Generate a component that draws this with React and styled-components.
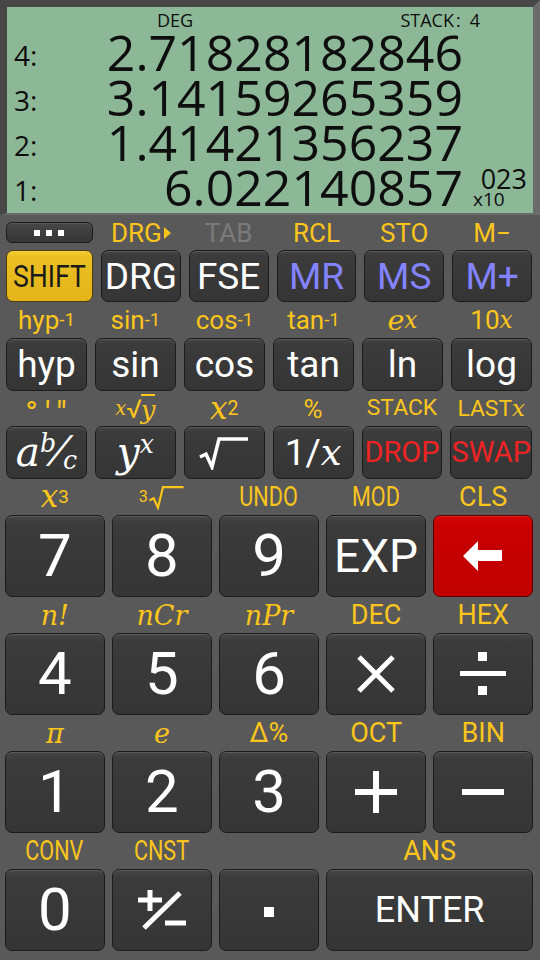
import styled, { createGlobalStyle } from 'styled-components'

const GlobalStyle = createGlobalStyle`
  html, body {
    margin: 0;
    padding: 0;
    background: #595959;
  }
  body {
    font-family: Roboto, "Noto Sans", sans-serif;
  }
`

const YELLOW = '#fbc51c'
const LAVENDER = '#8383ff'
const RED_INK = '#ee2424'

// Whole phone screen
const Screen = styled.div`
  width: 540px;
  height: 960px;
  overflow: hidden;
  background: #595959;
  display: flex;
  flex-direction: column;
`

// LCD panel
const Display = styled.div`
  height: 215px;
  box-sizing: border-box;
  border-style: solid;
  border-width: 7px 7px 2px 7px;
  border-color: #474747 #6b6b6b #6b6b6b #474747;
  background: #8db898;
  color: #0e0e0e;
  font-family: "Open Sans", "DejaVu Sans", sans-serif;
  display: flex;
  flex-direction: column;
`

const Status = styled.div`
  height: 23px;
  display: flex;
  justify-content: space-between;
  align-items: flex-end;
  padding: 0 53px 0 150px;
  font-size: 18px;
  line-height: 20px;
`

const Colon = styled.span`
  margin: 0 9px 0 2px;
`

const StackRow = styled.div`
  height: 45px;
  display: flex;
  align-items: center;
`

const RowLabel = styled.div`
  width: 40px;
  padding-left: 7px;
  padding-top: 6px;
  font-size: 28px;
  line-height: 45px;
`

const Value = styled.div`
  flex: 1;
  text-align: right;
  font-size: 50px;
  line-height: 45px;
  white-space: nowrap;
`

const Exponent = styled.div`
  width: 70px;
  height: 45px;
  display: flex;
  flex-direction: column;
  justify-content: flex-end;
`

const ExpDigits = styled.div`
  text-align: right;
  padding-right: 6px;
  font-size: 27px;
  line-height: 20px;
`

const ExpBase = styled.div`
  padding-left: 10px;
  font-size: 19px;
  line-height: 21px;
`

// Keypad
const KeyGrid = styled.div`
  display: grid;
  grid-template-columns: repeat(${(p) => p.$cols}, 1fr);
  column-gap: ${(p) => p.$gap}px;
  padding: ${(p) => p.$pad};
`

const Cell = styled.div`
  display: flex;
  flex-direction: column;
  grid-column: span ${(p) => p.$span || 1};
`

const Legend = styled.div`
  height: ${(p) => p.$h}px;
  display: flex;
  align-items: center;
  justify-content: center;
  color: ${(p) => (p.$muted ? '#7b7b7b' : YELLOW)};
  font-size: ${(p) => p.$size}px;
  line-height: 1;
  white-space: nowrap;
`

const tones = {
  dark: {
    bg: 'linear-gradient(#454545 0%, #3b3b3b 10%, #353535 100%)',
    border: '#1b1b1b',
    ink: '#ffffff',
  },
  shift: {
    bg: 'linear-gradient(#f4cd31 0%, #ebbf22 12%, #e3b41b 100%)',
    border: '#4a3d0e',
    ink: '#1a1a1a',
  },
  red: {
    bg: 'linear-gradient(#d80404 0%, #c90000 12%, #c00000 100%)',
    border: '#5a0000',
    ink: '#ffffff',
  },
}

const Key = styled.div`
  height: ${(p) => p.$h}px;
  box-sizing: border-box;
  border: 1px solid ${(p) => tones[p.$tone].border};
  border-radius: 7px;
  background: ${(p) => tones[p.$tone].bg};
  box-shadow: inset 0 1px 0 rgba(255, 255, 255, 0.12);
  color: ${(p) => p.$ink || tones[p.$tone].ink};
  font-size: ${(p) => p.$size}px;
  line-height: 1;
  display: flex;
  align-items: center;
  justify-content: center;
  white-space: nowrap;
`

const MenuKey = styled.div`
  width: 100%;
  height: 21px;
  box-sizing: border-box;
  border: 1px solid #1b1b1b;
  border-radius: 6px;
  background: linear-gradient(#474747, #363636);
  box-shadow: inset 0 1px 0 rgba(255, 255, 255, 0.1);
  display: flex;
  align-items: center;
  justify-content: center;
  gap: 6px;
`

const Dot = styled.span`
  width: 6px;
  height: 6px;
  background: #ffffff;
`

const Point = styled.span`
  width: 10px;
  height: 10px;
  background: #ffffff;
  margin-top: 3px;
`

const Tri = styled.span`
  display: inline-block;
  width: 0;
  height: 0;
  margin-left: 2px;
  border-top: 6px solid transparent;
  border-bottom: 6px solid transparent;
  border-left: 7px solid ${YELLOW};
`

const Sup = styled.span`
  font-size: ${(p) => p.$s || 0.6}em;
  vertical-align: ${(p) => p.$v || 0.6}em;
  line-height: 0;
`

const Sub = styled.span`
  font-size: ${(p) => p.$s || 0.6}em;
  vertical-align: -0.1em;
  line-height: 0;
`

const Var = styled.span`
  font-family: "DejaVu Serif", "Liberation Serif", serif;
  font-style: italic;
  font-size: ${(p) => p.$s || 1}em;
`

const Over = styled.span`
  display: inline-block;
  border-top: 2px solid currentColor;
  padding-top: 1px;
  margin-left: -1px;
  line-height: 1;
`

const Narrow = styled.span`
  display: inline-block;
  transform: scaleX(${(p) => p.$x || 0.8});
`

const Small = styled.span`
  font-size: 0.88em;
`

const Ticks = styled.span`
  letter-spacing: 7px;
  font-size: 1.3em;
  padding-top: 10px;
  padding-left: 6px;
`

function Radical({ color = '#fff', width = 52, height = 34, weight = 3.5 }) {
  return (
    <svg width={width} height={height} viewBox="0 0 52 34" preserveAspectRatio="none">
      <polyline
        points="2,21 8,18 14,31 21,3 50,3"
        fill="none"
        stroke={color}
        strokeWidth={weight}
        strokeLinejoin="miter"
      />
    </svg>
  )
}

function Plus() {
  return (
    <svg width="44" height="44" viewBox="0 0 44 44">
      <path d="M1 22 H43 M22 1 V43" stroke="#fff" strokeWidth="6" />
    </svg>
  )
}

function Minus() {
  return (
    <svg width="44" height="10" viewBox="0 0 44 10">
      <path d="M1 5 H43" stroke="#fff" strokeWidth="6" />
    </svg>
  )
}

function Times() {
  return (
    <svg width="40" height="40" viewBox="0 0 40 40">
      <path d="M3 3 L37 37 M37 3 L3 37" stroke="#fff" strokeWidth="5" />
    </svg>
  )
}

function Divide() {
  return (
    <svg width="48" height="44" viewBox="0 0 48 44">
      <rect x="19" y="0" width="9" height="9" fill="#fff" />
      <rect x="1" y="19" width="46" height="5" fill="#fff" />
      <rect x="19" y="34" width="9" height="9" fill="#fff" />
    </svg>
  )
}

function PlusMinus() {
  return (
    <svg width="50" height="40" viewBox="0 0 50 40">
      <path
        d="M1 10 H25 M13 0 V21 M7 38 L43 3 M28 33 H49"
        stroke="#fff"
        strokeWidth="5"
      />
    </svg>
  )
}

function BackArrow() {
  return (
    <svg width="40" height="30" viewBox="0 0 40 30">
      <polygon points="0,15 15,0 15,9 39,9 39,20 15,20 15,30" fill="#fff" />
    </svg>
  )
}

const stack = [
  { n: 4, v: '2.71828182846' },
  { n: 3, v: '3.14159265359' },
  { n: 2, v: '1.41421356237' },
  { n: 1, v: '6.022140857', exp: '023' },
]

const inv = <Sup $s={0.72} $v={0.5}>-1</Sup>

const topRows = [
  {
    label: 35,
    key: 52,
    cells: [
      { menu: true, face: <Narrow $x={0.86}>SHIFT</Narrow>, tone: 'shift', size: 31 },
      { label: <>DRG<Tri /></>, face: 'DRG' },
      { label: 'TAB', muted: true, face: 'FSE' },
      { label: 'RCL', face: 'MR', ink: LAVENDER },
      { label: 'STO', face: 'MS', ink: LAVENDER },
      { label: 'M−', face: 'M+', ink: LAVENDER },
    ],
  },
  {
    label: 36,
    key: 53,
    cells: [
      { label: <>hyp{inv}</>, face: 'hyp' },
      { label: <>sin{inv}</>, face: 'sin' },
      { label: <>cos{inv}</>, face: 'cos' },
      { label: <>tan{inv}</>, face: 'tan' },
      { label: <><Var $s={1.1}>e</Var><Sup $s={0.9} $v={0.4}><Var>x</Var></Sup></>, face: 'ln' },
      { label: <>10<Sup $s={0.9} $v={0.35}><Var>x</Var></Sup></>, face: 'log' },
    ],
  },
  {
    label: 35,
    key: 53,
    cells: [
      { label: <Ticks>°′″</Ticks>, face: <Var $s={1.1}>a<Sup $s={0.62} $v={0.55}>b</Sup>⁄<Sub $s={0.62}>c</Sub></Var> },
      { label: <><Sup $s={0.75} $v={0.45}><Var>x</Var></Sup>√<Over><Var>y</Var></Over></>, face: <Var $s={1.1}>y<Sup $s={0.62} $v={0.5}>x</Sup></Var> },
      { label: <><Var $s={1.2}>x</Var><Sup $s={0.75} $v={0.5}>2</Sup></>, face: <Radical /> },
      { label: '%', face: <>1/<Var>x</Var></> },
      { label: <Small>STACK</Small>, face: 'DROP', ink: RED_INK, size: 29 },
      { label: <Small>LAST<Var>x</Var></Small>, face: 'SWAP', ink: RED_INK, size: 29 },
    ],
  },
]

const bottomRows = [
  [
    { label: <><Var $s={1.15}>x</Var><Sup $s={0.7} $v={0.45}>3</Sup></>, face: '7' },
    { label: <><Sup $s={0.6} $v={0.35}>3</Sup><Radical color={YELLOW} width={37} height={25} weight={3} /></>, face: '8' },
    { label: <Narrow>UNDO</Narrow>, face: '9' },
    { label: <Narrow>MOD</Narrow>, face: 'EXP', size: 46 },
    { label: 'CLS', face: <BackArrow />, tone: 'red' },
  ],
  [
    { label: <Var>n!</Var>, face: '4' },
    { label: <Var>nCr</Var>, face: '5' },
    { label: <Var>nPr</Var>, face: '6' },
    { label: 'DEC', face: <Times /> },
    { label: 'HEX', face: <Divide /> },
  ],
  [
    { label: <Var>π</Var>, face: '1' },
    { label: <Var>e</Var>, face: '2' },
    { label: 'Δ%', face: '3' },
    { label: 'OCT', face: <Plus /> },
    { label: 'BIN', face: <Minus /> },
  ],
  [
    { label: <Narrow>CONV</Narrow>, face: '0' },
    { label: <Narrow>CNST</Narrow>, face: <PlusMinus /> },
    { label: '', face: <Point /> },
    { label: 'ANS', face: 'ENTER', size: 36, span: 2 },
  ],
]

function App() {
  return (
    <Screen>
      <GlobalStyle />
      <Display>
        <Status>
          <span>DEG</span>
          <span>
            STACK<Colon>:</Colon>4
          </span>
        </Status>
        {stack.map((row) => (
          <StackRow key={row.n}>
            <RowLabel>{row.n}:</RowLabel>
            <Value>{row.v}</Value>
            <Exponent>
              {row.exp && (
                <>
                  <ExpDigits>{row.exp}</ExpDigits>
                  <ExpBase>x10</ExpBase>
                </>
              )}
            </Exponent>
          </StackRow>
        ))}
      </Display>

      {topRows.map((row, r) => (
        <KeyGrid key={r} $cols={6} $gap={8} $pad="0 8px 0 6px">
          {row.cells.map((c, i) => (
            <Cell key={i}>
              <Legend $h={row.label} $size={26} $muted={c.muted}>
                {c.menu ? (
                  <MenuKey>
                    <Dot />
                    <Dot />
                    <Dot />
                  </MenuKey>
                ) : (
                  c.label
                )}
              </Legend>
              <Key $h={row.key} $tone={c.tone || 'dark'} $ink={c.ink} $size={c.size || 37}>
                {c.face}
              </Key>
            </Cell>
          ))}
        </KeyGrid>
      ))}

      {bottomRows.map((row, r) => (
        <KeyGrid key={r} $cols={5} $gap={7.5} $pad="0 7px 0 5px">
          {row.map((c, i) => (
            <Cell key={i} $span={c.span}>
              <Legend $h={36} $size={27}>
                {c.label}
              </Legend>
              <Key $h={82} $tone={c.tone || 'dark'} $size={c.size || 60}>
                {c.face}
              </Key>
            </Cell>
          ))}
        </KeyGrid>
      ))}
    </Screen>
  )
}

export default App
